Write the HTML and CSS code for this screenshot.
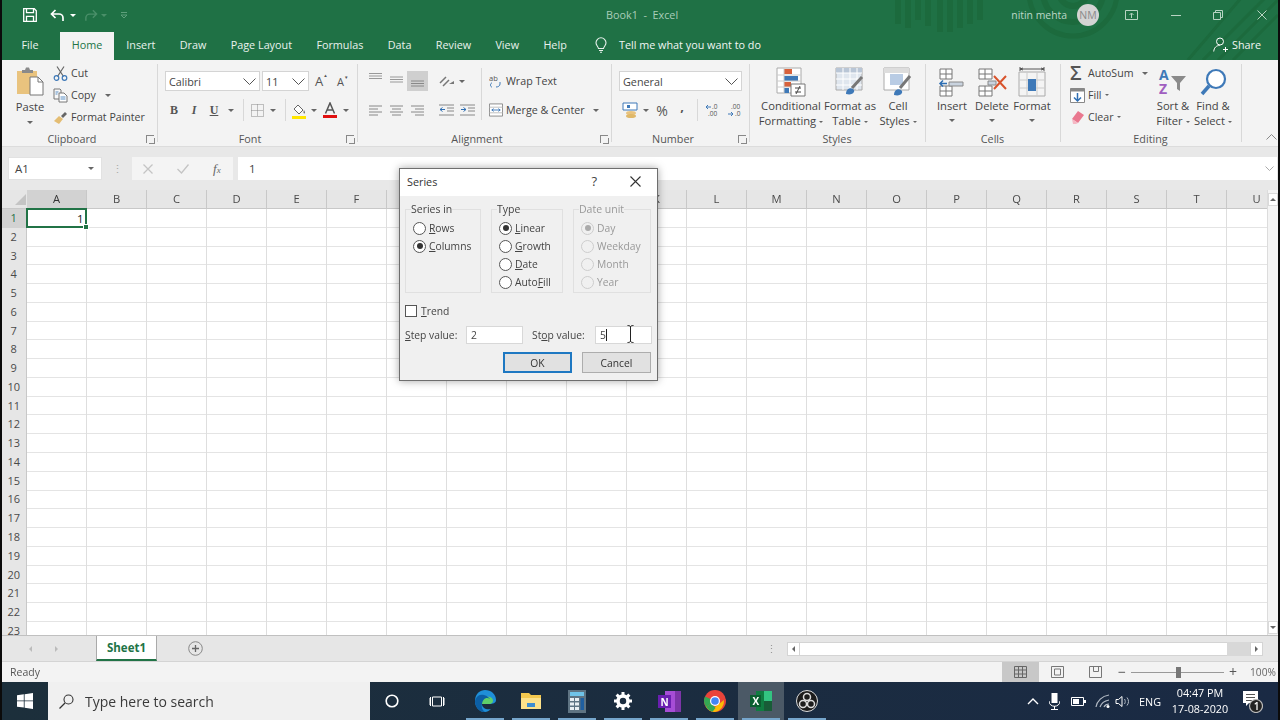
FILE: index.html
```html
<!DOCTYPE html>
<html lang="en">
<head>
<meta charset="utf-8">
<title>Book1 - Excel</title>
<link rel="stylesheet" href="styles.css">
</head>
<body>
<div class="screen">
  <header class="top">
    <svg class="decor" viewBox="0 0 420 60" width="420" height="60" aria-hidden="true">
      <g fill="none" stroke="#1c6a3d">
        <circle cx="215" cy="-8" r="44" stroke-width="5"/>
        <circle cx="215" cy="-8" r="30" stroke-width="6"/>
        <circle cx="215" cy="-8" r="14" stroke-width="6"/>
        <path d="M40-2v26M50-2v30M60-2v22M70-2v28M82-2v34M92-2v34M102-2v30M112-2v26M122-2v22" stroke-width="6"/>
        <path d="M345 60l70-70M360 60l60-60M375 60l45-45M330 60l60-70" stroke-width="3"/>
      </g>
    </svg>
    <div class="titlebar">
      <div class="qat">
        <svg class="q-save" width="14" height="14" viewBox="0 0 14 14"><path d="M.7.7h10.6l2 2v10.6H.7z" fill="none" stroke="#fff" stroke-width="1.3"/><path d="M3.5 1v3.6h7V1M3.5 13V8.300h7V13" fill="none" stroke="#fff" stroke-width="1.3"/></svg>
        <svg class="q-undo" width="15" height="13" viewBox="0 0 15 13"><path d="M5.500 1L1.500 5l4 4M2 5h7a4 4 0 0 1 4 4v3" fill="none" stroke="#fff" stroke-width="1.700"/></svg>
        <span class="caret caret-white q-c1"></span>
        <svg class="q-redo" width="14" height="13" viewBox="0 0 15 13"><path d="M9.500 1l4 4-4 4M13 5H6a4 4 0 0 0-4 4v3" fill="none" stroke="#4a8f69" stroke-width="1.500"/></svg>
        <span class="caret caret-dim q-c2"></span>
        <svg class="q-more" width="8" height="8" viewBox="0 0 8 8"><path d="M1 1.500h6M1 4l3 3 3-3z" fill="none" stroke="#5f9f7c"/></svg>
      </div>
      <div class="doc-title">Book1 &nbsp;-&nbsp; Excel</div>
      <div class="window-side">
        <span class="user">nitin mehta</span>
        <span class="avatar">NM</span>
        <svg class="w-opt" width="13" height="10" viewBox="0 0 13 10"><path d="M.5.500h12v9H.5zM6.500 8V3.500M4.500 5l2-2 2 2" fill="none" stroke="#b8d4c3"/></svg>
        <svg class="w-min" width="10" height="10" viewBox="0 0 10 10"><path d="M0 5.500h10" stroke="#b8d4c3"/></svg>
        <svg class="w-max" width="10" height="10" viewBox="0 0 10 10"><path d="M.5 2.500h7v7h-7zM2.500 2.500v-2h7v7h-2" fill="none" stroke="#b8d4c3"/></svg>
        <svg class="w-close" width="10" height="10" viewBox="0 0 10 10"><path d="M.5.500l9 9M9.500.500l-9 9" stroke="#b8d4c3"/></svg>
      </div>
    </div>
    <nav class="tabs">
      <span class="tab tab-file">File</span>
      <span class="tab tab-home">Home</span>
      <span class="tab">Insert</span>
      <span class="tab">Draw</span>
      <span class="tab">Page Layout</span>
      <span class="tab">Formulas</span>
      <span class="tab">Data</span>
      <span class="tab">Review</span>
      <span class="tab">View</span>
      <span class="tab">Help</span>
      <svg class="bulb" width="12" height="16" viewBox="0 0 12 16"><path d="M3.500 11.500C3 9 1 8.500 1 5.800a5 5 0 0 1 10 0c0 2.700-2 3.200-2.500 5.700zM4 13.500h4M5 15.300h2" fill="none" stroke="#e8f1ec" stroke-width="1.100"/></svg>
      <span class="tell">Tell me what you want to do</span>
      <span class="share">
        <svg width="15" height="15" viewBox="0 0 15 15"><circle cx="7" cy="4.500" r="3.500" fill="none" stroke="#fff"/><path d="M.7 14.500c.5-4 2.500-6 6-6M10 12.500h5M12.500 10v5" fill="none" stroke="#fff"/></svg>
        Share
      </span>
    </nav>
  </header>

  <section class="ribbon">
    <div class="group g-clip">
      <div class="g-body">
        <div class="big paste">
          <svg width="28" height="29" viewBox="0 0 28 29"><path d="M1 4h20v23H1z" fill="#e9c37e"/><path d="M6 3h3l1-2.500h3L14 3h3v3H6z" fill="#8a8a8a"/><path d="M14 10h8l5 5v13H14z" fill="#fff" stroke="#777"/><path d="M22 10v5h5" fill="none" stroke="#777"/></svg>
          <span>Paste</span>
          <span class="caret big-caret"></span>
        </div>
        <div class="stack">
          <div class="line">
            <svg class="sm" width="15" height="15" viewBox="0 0 15 15"><path d="M4 .5l6.500 10M11 .5L4.500 10.500" fill="none" stroke="#666" stroke-width="1.200"/><circle cx="3.500" cy="12" r="2.300" fill="none" stroke="#3e79b8" stroke-width="1.200"/><circle cx="11.500" cy="12" r="2.300" fill="none" stroke="#3e79b8" stroke-width="1.200"/></svg>
            Cut
          </div>
          <div class="line">
            <svg class="sm" width="15" height="15" viewBox="0 0 15 15"><path d="M1 1h6l1 1v9H1z" fill="#f8f8f8" stroke="#777"/><path d="M6 5h5l3 3v6H6z" fill="#fff" stroke="#777"/><path d="M2.500 4h3M2.500 6h2M7.500 9h5M7.500 11h5" stroke="#5a8fc4"/></svg>
            Copy <span class="caret copy-caret"></span>
          </div>
          <div class="line">
            <svg class="sm" width="15" height="15" viewBox="0 0 15 15"><path d="M1 11l5-5 4 3-4 5z" fill="#e4bd73"/><path d="M8 6l4-4 2 2-4 4z" fill="#666"/></svg>
            Format Painter
          </div>
        </div>
      </div>
      <div class="g-label"><span>Clipboard</span><i class="launch"></i></div>
    </div>

    <div class="group g-font">
      <div class="g-body col">
        <div class="row-a">
          <div class="combo c-name">Calibri<svg class="chev" width="13" height="7" viewBox="0 0 13 7"><path d="M.5.500l6 6 6-6" fill="none" stroke="#555"/></svg></div>
          <div class="combo c-size">11<svg class="chev" width="13" height="7" viewBox="0 0 13 7"><path d="M.5.500l6 6 6-6" fill="none" stroke="#555"/></svg></div>
          <span class="grow">A<sup>&#9650;</sup></span>
          <span class="shrink">A<sup>&#9660;</sup></span>
        </div>
        <div class="row-b">
          <span class="cell w20 bold">B</span>
          <span class="cell w20 ital">I</span>
          <span class="cell w20 bold und">U</span>
          <span class="cell w14"><span class="caret"></span></span>
          <span class="vsep"></span>
          <span class="cell w18"><svg width="13" height="13" viewBox="0 0 13 13"><path d="M.5.500h12v12H.5zM6.500.500v12M.5 6.500h12" fill="none" stroke="#888" stroke-dasharray="1 1"/></svg></span>
          <span class="cell w14"><span class="caret"></span></span>
          <span class="vsep"></span>
          <span class="cell w18"><svg width="16" height="17" viewBox="0 0 16 17"><path d="M3 7l4-4 5 5-4 4z" fill="#fff" stroke="#666"/><path d="M13 8c1 2 1.500 3 .5 3.500S12 10 13 8z" fill="#777"/><path d="M1 14h14v3H1z" fill="#ffe600"/></svg></span>
          <span class="cell w12"><span class="caret"></span></span>
          <span class="cell w20"><svg width="16" height="16" viewBox="0 0 16 16"><path d="M1 13h14v3H1z" fill="#e01010"/><path d="M3.500 11.500L8 1l4.500 10.500M5 8h6" fill="none" stroke="#555" stroke-width="1.500"/></svg></span>
          <span class="cell w12"><span class="caret"></span></span>
        </div>
      </div>
      <div class="g-label"><span>Font</span><i class="launch"></i></div>
    </div>

    <div class="group g-align">
      <div class="g-body">
        <div class="col">
          <div class="row-a">
            <span class="cell w21"><svg width="14" height="18" viewBox="0 0 14 18"><path d="M0 1.500h13M0 4h13M0 6.500h13" stroke="#999"/></svg></span>
            <span class="cell w21"><svg width="14" height="18" viewBox="0 0 14 18"><path d="M0 5h13M0 7.500h13M0 10h13" stroke="#999"/></svg></span>
            <span class="cell w21 active"><svg width="14" height="18" viewBox="0 0 14 18"><path d="M0 9h13M0 11.500h13M0 14h13" stroke="#888"/></svg></span>
            <span class="cell w18 ml10"><svg width="16" height="13" viewBox="0 0 16 13"><path d="M1 8l6-6M4 11l6-6" stroke="#777" stroke-width="1.500" fill="none"/><path d="M10 9l5-3v3z" fill="#777"/></svg></span>
            <span class="cell w12"><span class="caret"></span></span>
          </div>
          <div class="row-b">
            <span class="cell w21"><svg width="14" height="11" viewBox="0 0 14 11"><path d="M0 1h13M0 4h9M0 7h13M0 10h9" stroke="#888"/></svg></span>
            <span class="cell w21"><svg width="14" height="11" viewBox="0 0 14 11"><path d="M0 1h13M2 4h9M0 7h13M2 10h9" stroke="#888"/></svg></span>
            <span class="cell w21"><svg width="14" height="11" viewBox="0 0 14 11"><path d="M0 1h13M4 4h9M0 7h13M4 10h9" stroke="#888"/></svg></span>
            <span class="cell w21 ml8"><svg width="16" height="13" viewBox="0 0 16 13"><path d="M0 1h15M8 4h7M8 7h7M0 11h15" stroke="#888"/><path d="M6 5.500H1M3.500 3.500l-2.500 2 2.500 2" fill="none" stroke="#2f6fb3"/></svg></span>
            <span class="cell w21"><svg width="16" height="13" viewBox="0 0 16 13"><path d="M0 1h15M8 4h7M8 7h7M0 11h15" stroke="#888"/><path d="M1 5.500h5M3.500 3.500l2.500 2-2.500 2" fill="none" stroke="#2f6fb3"/></svg></span>
          </div>
        </div>
        <span class="vsep tall"></span>
        <div class="col wrapcol">
          <div class="row-a">
            <svg class="sm2" width="14" height="14" viewBox="0 0 14 14"><text x="0" y="7" class="ab">ab</text><path d="M3 9c-2 0-2 4 0 4M11 8v2c0 2-2 3-4 3" fill="none" stroke="#3e79b8"/></svg>
            <span>Wrap Text</span>
          </div>
          <div class="row-b">
            <svg class="sm2" width="14" height="14" viewBox="0 0 15 14"><path d="M.5.500h14v13H.5z" fill="#fff" stroke="#888"/><path d="M.5 4h14M.5 10h14" stroke="#bbb"/><path d="M3 7h9M5 5.500L3 7l2 1.500M10 5.500L12 7l-2 1.500" fill="none" stroke="#3e79b8"/></svg>
            <span>Merge &amp; Center</span>
            <span class="caret merge-caret"></span>
          </div>
        </div>
      </div>
      <div class="g-label"><span>Alignment</span><i class="launch"></i></div>
    </div>

    <div class="group g-num">
      <div class="g-body col">
        <div class="row-a">
          <div class="combo c-gen">General<svg class="chev" width="13" height="7" viewBox="0 0 13 7"><path d="M.5.500l6 6 6-6" fill="none" stroke="#555"/></svg></div>
        </div>
        <div class="row-b">
          <span class="cell w20"><svg width="17" height="16" viewBox="0 0 17 16"><path d="M1 1h14v7H1z" fill="#fff" stroke="#3e79b8"/><path d="M5 3h3v3H5z" fill="#3e79b8"/><ellipse cx="9" cy="11" rx="5" ry="2" fill="#e9c37e"/><ellipse cx="9" cy="14" rx="5" ry="2" fill="#e0b868"/></svg></span>
          <span class="cell w12"><span class="caret"></span></span>
          <span class="cell w20 pct">%</span>
          <span class="cell w20 bold comma">,</span>
          <span class="vsep"></span>
          <span class="cell w22 inc"><svg width="16" height="14" viewBox="0 0 16 14"><path d="M1 4h5M3 2L1 4l2 2" fill="none" stroke="#3e79b8"/><text x="7" y="6" class="dec">.0</text><text x="3" y="13" class="dec">.00</text></svg></span>
          <span class="cell w22"><svg width="16" height="14" viewBox="0 0 16 14"><text x="4" y="6" class="dec">.00</text><path d="M1 11h5M4 9l2 2-2 2" fill="none" stroke="#3e79b8"/><text x="8" y="13" class="dec">.0</text></svg></span>
        </div>
      </div>
      <div class="g-label"><span>Number</span><i class="launch"></i></div>
    </div>

    <div class="group g-styles">
      <div class="g-body">
        <div class="big b62">
          <svg class="big-ico" width="30" height="30" viewBox="0 0 30 30"><path d="M1 1h24v25H1z" fill="#fff" stroke="#aaa"/><path d="M8 2h8v5H8z" fill="#d8623c"/><path d="M8 9h14v5H8z" fill="#3e79b8"/><path d="M8 15h7v5H8z" fill="#d8623c"/><path d="M8 21h5v5H8z" fill="#3e79b8"/><path d="M1 8h24M1 14h24M1 20h24M8 1v25" stroke="#ccc" fill="none"/><path d="M15 17h14v12H15z" fill="#fff" stroke="#777"/><path d="M19 21h6M19 25h6M24 19l-4 8" stroke="#444" fill="none"/></svg>
          <span>Conditional</span><span>Formatting<i class="caret tiny"></i></span>
        </div>
        <div class="big b56">
          <svg class="big-ico" width="30" height="30" viewBox="0 0 30 30"><path d="M1 1h26v22H1z" fill="#dfe6ee" stroke="#aaa"/><path d="M1 1h26v5H1z" fill="#b9c6d6"/><path d="M1 6h26M1 12h26M1 18h26M8 1v22M15 1v22M22 1v22" stroke="#fff" fill="none"/><path d="M27 10L17 21" stroke="#777" stroke-width="3"/><path d="M11 27c0-5 4-7 7-5s0 7-7 5z" fill="#3e79b8"/></svg>
          <span>Format as</span><span>Table<i class="caret tiny"></i></span>
        </div>
        <div class="big b40">
          <svg class="big-ico" width="30" height="30" viewBox="0 0 30 30"><path d="M1 1h25v22H1z" fill="#fff" stroke="#aaa"/><path d="M1 1h25v5H1z" fill="#ddd"/><path d="M7 7h13v11H7z" fill="#b9cce4"/><path d="M27 9L17 21" stroke="#777" stroke-width="3"/><path d="M11 28c0-5 4-7 7-5s0 7-7 5z" fill="#3e79b8"/></svg>
          <span>Cell</span><span>Styles<i class="caret tiny"></i></span>
        </div>
      </div>
      <div class="g-label plain"><span>Styles</span></div>
    </div>

    <div class="group g-cells">
      <div class="g-body">
        <div class="big b40">
          <svg class="big-ico" width="28" height="28" viewBox="0 0 28 28"><path d="M2 1h12v10H2zM8 1v10M2 6h12M2 18h12v10H2zM8 18v10M2 23h12" fill="#fff" stroke="#777"/><path d="M11 14h14v4H11z" fill="#c9d3df" stroke="#888"/><path d="M9 15.500H2M5 12.500l-3 3 3 3" fill="none" stroke="#2f6fb3" stroke-width="1.500"/></svg>
          <span>Insert</span><i class="caret big-caret"></i>
        </div>
        <div class="big b40">
          <svg class="big-ico" width="30" height="28" viewBox="0 0 30 28"><path d="M2 1h13v10H2zM8 1v10M2 6h13M2 18h13v10H2zM8 18v10M2 23h13" fill="#fff" stroke="#777"/><path d="M11 13h8v4h-8z" fill="#c9d3df" stroke="#888"/><path d="M17 8l12 13M29 8L17 21" stroke="#d8532c" stroke-width="2"/></svg>
          <span>Delete</span><i class="caret big-caret"></i>
        </div>
        <div class="big b40">
          <svg class="big-ico" width="28" height="30" viewBox="0 0 28 30"><path d="M1 5h26v24H1z" fill="#f4f4f4" stroke="#aaa"/><path d="M9 5v24M19 5v24M1 13h26M1 21h26" stroke="#ccc" fill="none"/><path d="M10 12h8v12h-8z" fill="#3e79b8"/><path d="M2 2h24M2 0v4M26 0v4M5 1L2 2l3 1M23 1l3 1-3 1" fill="none" stroke="#555"/></svg>
          <span>Format</span><i class="caret big-caret"></i>
        </div>
      </div>
      <div class="g-label plain"><span>Cells</span></div>
    </div>

    <div class="group g-edit">
      <div class="g-body">
        <div class="stack edit-stack">
          <div class="line"><span class="sigma">&Sigma;</span>AutoSum<span class="caret sum-caret"></span></div>
          <div class="line">
            <svg class="sm" width="15" height="15" viewBox="0 0 15 15"><path d="M.5.500h14v14H.5z" fill="#fff" stroke="#888"/><path d="M.5.500h14v3H.5z" fill="#888"/><path d="M7.500 5v8M4 9.500l3.500 3.500L11 9.500" fill="none" stroke="#2f6fb3" stroke-width="1.500"/></svg>
            Fill<i class="caret tiny"></i>
          </div>
          <div class="line">
            <svg class="sm" width="15" height="15" viewBox="0 0 15 15"><path d="M8 1l6 4-6 8-6-4z" fill="#e9788f"/><path d="M2 9l6 4-2 1H3z" fill="#f5b8c4"/></svg>
            Clear<i class="caret tiny"></i>
          </div>
        </div>
        <div class="big b40">
          <svg class="big-ico" width="30" height="28" viewBox="0 0 30 28"><text x="1" y="12" class="az az-a">A</text><text x="1" y="26" class="az az-z">Z</text><path d="M13 8h15l-6 7v8l-3-2v-6z" fill="#8a8a8a"/></svg>
          <span>Sort &amp;</span><span>Filter<i class="caret tiny"></i></span>
        </div>
        <div class="big b40">
          <svg class="big-ico" width="28" height="28" viewBox="0 0 28 28"><circle cx="17" cy="11" r="9" fill="#fff" stroke="#3e79b8" stroke-width="2.200"/><path d="M10 18l-7 8" stroke="#3e79b8" stroke-width="3.500"/></svg>
          <span>Find &amp;</span><span>Select<i class="caret tiny"></i></span>
        </div>
      </div>
      <div class="g-label plain"><span>Editing</span></div>
    </div>

    <div class="collapse"><svg width="11" height="6" viewBox="0 0 11 6"><path d="M.5 5.500l5-5 5 5" fill="none" stroke="#888"/></svg></div>
  </section>

  <div class="strip"></div>

  <section class="fbar">
    <div class="namebox">A1<span class="caret name-caret"></span></div>
    <div class="fdots">&#8942;</div>
    <div class="fbtns">
      <svg width="10" height="10" viewBox="0 0 10 10"><path d="M.5.500l9 9M9.500.500l-9 9" stroke="#c4c4c4" stroke-width="1.300"/></svg>
      <svg width="12" height="10" viewBox="0 0 12 10"><path d="M.5 5l4 4 7-8.500" fill="none" stroke="#c4c4c4" stroke-width="1.300"/></svg>
      <span class="fx">f<small>x</small></span>
    </div>
    <div class="finput">1<svg class="fchev" width="9" height="5" viewBox="0 0 9 5"><path d="M.5.500l4 4 4-4" fill="none" stroke="#aaa"/></svg></div>
  </section>

  <section class="sheet">
    <div class="colhead">
      <div class="corner"><svg width="11" height="11" viewBox="0 0 11 11"><path d="M11 0v11H0z" fill="#c4c4c4"/></svg></div>
      <div class="columns">
        <span class="on">A</span><span>B</span><span>C</span><span>D</span><span>E</span><span>F</span><span>G</span><span>H</span><span>I</span><span>J</span><span>K</span><span>L</span><span>M</span><span>N</span><span>O</span><span>P</span><span>Q</span><span>R</span><span>S</span><span>T</span><span>U</span>
      </div>
    </div>
    <div class="gridwrap">
      <div class="rowhead">
        <span class="on">1</span><span>2</span><span>3</span><span>4</span><span>5</span><span>6</span><span>7</span><span>8</span><span>9</span><span>10</span><span>11</span><span>12</span><span>13</span><span>14</span><span>15</span><span>16</span><span>17</span><span>18</span><span>19</span><span>20</span><span>21</span><span>22</span><span>23</span>
      </div>
      <div class="cells">
        <div class="selected">1<i class="handle"></i></div>
      </div>
    </div>
    <aside class="vscroll">
      <span class="sbtn"><i class="tri-up"></i></span>
      <span class="sbtn"><i class="tri-down"></i></span>
    </aside>
  </section>

  <section class="sheetbar">
    <span class="nav nav-l"><i class="tri-left dim"></i></span>
    <span class="nav"><i class="tri-right dim"></i></span>
    <span class="sheet-tab">Sheet1</span>
    <svg class="add" width="15" height="15" viewBox="0 0 15 15"><circle cx="7.500" cy="7.500" r="6.800" fill="none" stroke="#888"/><path d="M7.500 4v7M4 7.500h7" stroke="#666" stroke-width="1.300"/></svg>
    <span class="sdots">&#8942;</span>
    <div class="hscroll">
      <span class="hbtn"><i class="tri-left"></i></span>
      <span class="hthumb"></span>
      <span class="hrest"></span>
      <span class="hbtn"><i class="tri-right"></i></span>
    </div>
  </section>

  <section class="status">
    <span class="ready">Ready</span>
    <div class="views">
      <span class="view active"><svg width="13" height="12" viewBox="0 0 13 12"><path d="M.5.500h12v11H.5zM4.500.500v11M8.500.500v11M.5 4h12M.5 8h12" fill="none" stroke="#666"/></svg></span>
      <span class="view"><svg width="13" height="12" viewBox="0 0 13 12"><path d="M.5.500h12v11H.5zM3.500 3h6v6h-6z" fill="none" stroke="#777"/></svg></span>
      <span class="view"><svg width="13" height="12" viewBox="0 0 13 12"><path d="M.5.500h12v11H.5zM4.500.500v5h5v-5" fill="none" stroke="#777"/></svg></span>
    </div>
    <div class="zoom">
      <span class="zm">&minus;</span>
      <div class="slider"><i></i></div>
      <span class="zm">+</span>
      <span class="pct100">100%</span>
    </div>
  </section>

  <footer class="taskbar">
    <span class="start"><svg width="16" height="16" viewBox="0 0 16 16"><path d="M0 2.300l6.800-1v6.200H0zM7.600 1.200L16 0v7.500H7.600zM0 8.300h6.800v6.300L0 13.700zM7.600 8.300H16V16l-8.400-1.200z" fill="#fff"/></svg></span>
    <div class="search">
      <svg width="15" height="15" viewBox="0 0 15 15"><circle cx="9.500" cy="5.500" r="4.500" fill="none" stroke="#333" stroke-width="1.100"/><path d="M6 9l-5.500 5.500" stroke="#333" stroke-width="1.300"/></svg>
      <span>Type here to search</span>
    </div>
    <span class="tb tb-o"><svg width="14" height="14" viewBox="0 0 14 14"><circle cx="7" cy="7" r="5.800" fill="none" stroke="#fff" stroke-width="1.600"/></svg></span>
    <span class="tb"><svg width="16" height="13" viewBox="0 0 16 13"><path d="M3.500 2h9v9h-9zM0 3v7M1.500 2v9M14.500 2v9M16 3v7" fill="none" stroke="#fff"/></svg></span>
    <span class="tb app"><svg width="24" height="24" viewBox="0 0 24 24"><path d="M2 12C2 5 7 1 12 1c6 0 11 4 11 10 0 3-3 4-7 4H9c0 4 4 6 9 5-2 2-4 3-6 3C6 23 2 18 2 12z" fill="#1f8fd8"/><path d="M9 15C7 9 13 6 17 8c3 1 4 4 2 6-1 1-3 1-3 1z" fill="#5fd06a"/><path d="M2 12c1-5 5-7 9-6s6 4 6 4c-3-2-7-1-8 5-1 4 1 7 3 8-6 0-10-5-10-11z" fill="#0c5fa5"/></svg></span>
    <span class="tb app"><svg width="22" height="18" viewBox="0 0 22 18"><path d="M1 1h8l2 2h10v14H1z" fill="#f4c94f"/><path d="M1 6h20v11H1z" fill="#fde28a"/><path d="M7 11h8v4H7z" fill="#3e8ed0"/></svg></span>
    <span class="tb app"><svg width="18" height="23" viewBox="0 0 18 23"><path d="M0 0h18v23H0z" fill="#5f7483"/><path d="M2 2h14v4H2z" fill="#6fc3e8"/><path d="M2 8h4v3H2zM7 8h4v3H7zM2 12.500h4v3H2zM7 12.500h4v3H7zM2 17h4v3H2zM7 17h4v3H7z" fill="#e8eef2"/><path d="M12.500 8H16v12h-3.500z" fill="#1f5fa0"/></svg></span>
    <span class="tb app"><svg width="18" height="18" viewBox="0 0 18 18"><circle cx="9" cy="9" r="5" fill="none" stroke="#fff" stroke-width="3.500"/><path d="M9 0v4M9 14v4M0 9h4M14 9h4M2.600 2.600l2.800 2.800M12.600 12.600l2.800 2.800M2.600 15.400l2.800-2.800M12.600 5.400l2.800-2.800" stroke="#fff" stroke-width="3"/></svg></span>
    <span class="tb app"><svg width="23" height="21" viewBox="0 0 23 21"><path d="M7 0h16v21H7z" fill="#a64dd6"/><path d="M17 0h6v21h-6z" fill="#7d35a8"/><path d="M0 4h13v13H0z" fill="#6a1fb0"/><text x="2.500" y="14.500" class="tile">N</text></svg></span>
    <span class="tb app"><svg width="22" height="22" viewBox="0 0 22 22"><circle cx="11" cy="11" r="11" fill="#e9443a"/><path d="M11 11L2 17A11 11 0 0 1 1 6.500z" fill="#34a853"/><path d="M11 22a11 11 0 0 1-9-5l5-3 4 3 9-7a11 11 0 0 1-9 12z" fill="#fbbc05"/><path d="M2 17l5.500-4 4 5-3 3.800A11 11 0 0 1 2 17z" fill="#34a853"/><circle cx="11" cy="11" r="5" fill="#fff"/><circle cx="11" cy="11" r="3.800" fill="#4285f4"/></svg></span>
    <span class="tb app current"><svg width="22" height="20" viewBox="0 0 22 20"><path d="M6 0h16v20H6z" fill="#107c41"/><path d="M14 0h8v10h-8z" fill="#33c481"/><path d="M14 10h8v10h-8z" fill="#185c37"/><path d="M0 4h11v12H0z" fill="#0b5e30"/><text x="2.500" y="14" class="tile">X</text></svg></span>
    <span class="tb app"><svg width="22" height="22" viewBox="0 0 22 22"><circle cx="11" cy="11" r="10.500" fill="#1c1c1c" stroke="#ddd"/><circle cx="11" cy="7" r="3.500" fill="none" stroke="#ddd" stroke-width="1.500"/><circle cx="7" cy="14" r="3.500" fill="none" stroke="#ddd" stroke-width="1.500"/><circle cx="15" cy="14" r="3.500" fill="none" stroke="#ddd" stroke-width="1.500"/></svg></span>
    <div class="tray">
      <span class="t24"><svg width="12" height="7" viewBox="0 0 12 7"><path d="M1 6l5-5 5 5" fill="none" stroke="#fff" stroke-width="1.400"/></svg></span>
      <span class="t18"><svg width="11" height="17" viewBox="0 0 11 17"><path d="M2.500 0h6v10h-6z" fill="#fff"/><path d="M0 8c0 7 11 7 11 0M5.500 13v3M2 16.500h7" fill="none" stroke="#fff"/></svg></span>
      <span class="t30"><svg width="15" height="9" viewBox="0 0 15 9"><path d="M.5.500h12v8H.5z" fill="none" stroke="#fff"/><path d="M2 2h6v5H2z" fill="#fff"/><path d="M13 3h2v3h-2z" fill="#fff"/></svg></span>
      <span class="t18"><svg width="15" height="14" viewBox="0 0 15 14"><path d="M1 13C2 7 7 2 14 1M5 13c1-3 4-6 9-7M9 13c1-2 3-3 5-3" fill="none" stroke="#b4bcc6" stroke-width="1.200"/><circle cx="13" cy="12.500" r="1.500" fill="#fff"/></svg></span>
      <span class="t22"><svg width="15" height="13" viewBox="0 0 15 13"><path d="M1 4.500h2.500L7 1.500v10l-3.500-3H1z" fill="none" stroke="#fff"/><path d="M9.500 4c1 1.500 1 3.500 0 5M12 2.500c2 2.500 2 5.500 0 8" fill="none" stroke="#b4bcc6"/></svg></span>
      <span class="t34 eng">ENG</span>
      <span class="clock"><span>04:47 PM</span><span>17-08-2020</span></span>
      <span class="notif"><svg width="21" height="23" viewBox="0 0 21 23"><path d="M1 1h15v12H7l-3 3v-3H1z" fill="#fff"/><path d="M4 4.500h9M4 7.500h9M4 10.500h6" stroke="#555"/><circle cx="14" cy="16" r="6.500" fill="#222" stroke="#bbb" stroke-width="1.200"/><text x="11.700" y="19.500" class="ncount">1</text></svg></span>
    </div>
  </footer>

  <div class="dialog">
    <div class="d-head">
      <span class="d-title">Series</span>
      <span class="d-help">?</span>
      <svg class="d-x" width="11" height="11" viewBox="0 0 11 11"><path d="M.5.500l10 10M10.500.500l-10 10" stroke="#333" stroke-width="1.100"/></svg>
    </div>
    <div class="d-body">
      <div class="d-groups">
        <fieldset class="fs fs-in">
          <legend>Series in</legend>
          <label class="opt"><i class="radio"></i><span><u>R</u>ows</span></label>
          <label class="opt"><i class="radio sel"></i><span><u>C</u>olumns</span></label>
        </fieldset>
        <fieldset class="fs fs-type">
          <legend>Type</legend>
          <label class="opt"><i class="radio sel"></i><span><u>L</u>inear</span></label>
          <label class="opt"><i class="radio"></i><span><u>G</u>rowth</span></label>
          <label class="opt"><i class="radio"></i><span><u>D</u>ate</span></label>
          <label class="opt"><i class="radio"></i><span>Auto<u>F</u>ill</span></label>
        </fieldset>
        <fieldset class="fs fs-unit">
          <legend>Date unit</legend>
          <label class="opt"><i class="radio sel"></i><span>Day</span></label>
          <label class="opt"><i class="radio"></i><span>Weekday</span></label>
          <label class="opt"><i class="radio"></i><span>Month</span></label>
          <label class="opt"><i class="radio"></i><span>Year</span></label>
        </fieldset>
      </div>
      <label class="trend"><i class="check"></i><span><u>T</u>rend</span></label>
      <div class="values">
        <span class="v-l1"><u>S</u>tep value:</span>
        <span class="v-in">2</span>
        <span class="v-l2">St<u>o</u>p value:</span>
        <span class="v-in v-stop">5<i class="textcaret"></i>
          <svg class="ibeam" width="7" height="18" viewBox="0 0 7 18"><path d="M.5.500c2 0 3 .5 3 1.500 0-1 1-1.500 3-1.500M3.500 2v14M.5 17.500c2 0 3-.5 3-1.500 0 1 1 1.500 3 1.500" fill="none" stroke="#222"/></svg>
        </span>
      </div>
      <div class="d-btns">
        <span class="btn btn-ok">OK</span>
        <span class="btn">Cancel</span>
      </div>
    </div>
  </div>
</div>
</body>
</html>
```
FILE: styles.css
```css
*{box-sizing:border-box}
html,body{margin:0;height:100%;overflow:hidden}
body{background:#0b0b0b;font-family:"Open Sans","Noto Sans",sans-serif;font-size:11.200px;color:#444}
i{font-style:normal;display:inline-block}
.screen{position:relative;width:1280px;height:720px;padding:0 2px;display:flex;flex-direction:column;overflow:hidden;filter:blur(.4px)}

/* top green */
.top{position:relative;height:60px;background:#1f7145;color:#fff;flex:none;overflow:hidden}
.decor{position:absolute;right:0;top:0}
.titlebar{position:relative;display:flex;align-items:center;height:30px}
.qat{display:flex;align-items:center;width:130px;flex:none}
.q-save{margin-left:21px}
.q-undo{margin-left:13px}
.q-c1{margin-left:5px}
.q-redo{margin-left:8px}
.q-c2{margin-left:3px}
.q-more{margin-left:13px}
.caret{display:inline-block;width:0;height:0;border:3px solid transparent;border-bottom:0;border-top-color:#666}
.caret-white{border-top-color:#fff}
.caret-dim{border-top-color:#4a8f69}
.doc-title{position:absolute;left:604px;top:7px;font-size:10.800px;color:#a9cdb9;white-space:nowrap}
.window-side{margin-left:auto;display:flex;align-items:center;color:#bcd7c7}
.user{font-size:10.400px}
.avatar{width:22px;height:22px;border-radius:50%;background:#d4d4d4;color:#8a8a8a;display:flex;align-items:center;justify-content:center;margin-left:10px;font-size:10.500px}
.w-opt{margin-left:26px}
.w-min{margin-left:33px}
.w-max{margin-left:32px}
.w-close{margin-left:34px;margin-right:11px}
.tabs{position:relative;display:flex;align-items:center;height:30px;font-size:10.800px}
.tab{height:28px;margin-top:2px;padding:0 12.200px 3px;display:flex;align-items:center;color:#e9f2ed;white-space:nowrap}
.tab-file{padding:0 21.500px 3px 19.500px}
.tab-home{background:#f3f3f3;color:#217346;padding:0 11.500px 3px;width:54px;justify-content:center}
.bulb{margin-left:16px;margin-bottom:1px}
.tell{margin-left:12px;margin-bottom:1px;color:#f1f6f3;white-space:nowrap}
.share{margin-left:auto;margin-right:17px;margin-bottom:1px;display:flex;align-items:center;gap:4px;color:#f1f6f3}

/* ribbon */
.ribbon{height:86px;flex:none;display:flex;background:#f3f3f3;position:relative}
.group{position:relative;height:86px;flex:none;display:flex;flex-direction:column}
.group::after{content:"";position:absolute;right:0;top:4px;bottom:4px;width:1px;background:#d8d8d8}
.g-body{height:73px;display:flex;flex:none}
.col{display:flex;flex-direction:column}
.g-label{height:12px;line-height:12px;display:flex;font-size:10.800px;color:#555}
.g-label span{flex:1;text-align:center}
.g-label.plain span{padding-right:2px}
.launch{width:16px;position:relative}
.launch::before{content:"";position:absolute;left:4px;top:2px;width:7px;height:7px;border:1px solid #888;border-right:0;border-bottom:0;box-shadow:2px 2px 0 -1px #888}
.g-clip{width:156px}
.g-font{width:200px}
.g-align{width:254px}
.g-num{width:138px}
.g-styles{width:176px}
.g-cells{width:135px}
.g-edit{width:181px}

.paste{width:46px;margin-left:5px;padding-top:7px}
.paste svg{height:29px;flex:none}
.paste span{line-height:15px}
.paste span:first-of-type{margin-top:3px}
.big{display:flex;flex-direction:column;align-items:center;flex:none;white-space:nowrap}
.big>span{line-height:15px;height:15px}
.big-ico{height:30px;margin-top:7px;margin-bottom:1px;flex:none}
.big-caret{margin-top:6px}
.paste .big-caret{margin-top:7px;height:0}
.stack{padding-top:2px;display:flex;flex-direction:column;font-size:10.600px}
.line{height:22px;display:flex;align-items:center;white-space:nowrap}
.sm{flex:none;margin-right:3px}
.copy-caret{margin-left:9px}
.tiny{margin-left:3px;vertical-align:middle;border-width:2.500px;border-bottom:0}
.row-a{height:20px;margin-top:11px;display:flex;align-items:center;white-space:nowrap}
.row-b{height:20px;margin-top:9px;display:flex;align-items:center;white-space:nowrap}
.g-font .row-a,.g-num .row-a{padding-left:7px}
.g-font .row-b{padding-left:6px}
.g-num .row-b{padding-left:8px}
.combo{height:20px;background:#fff;border:1px solid #d4d4d4;display:flex;align-items:center;padding-left:3px;position:relative;font-size:10.800px}
.chev{margin-left:auto;margin-right:3px}
.c-name{width:95px}
.c-size{width:47px;margin-left:2px}
.c-gen{width:123px}
.grow,.shrink{display:inline-flex;color:#555;font-size:13px}
.grow{margin-left:6px;width:15px}
.shrink{margin-left:7px;font-size:11px;width:14px}
.grow sup,.shrink sup{font-size:4.500px;line-height:7px;vertical-align:top}
.cell{display:flex;align-items:center;justify-content:center;height:20px;flex:none;color:#555}
.w12{width:12px}.w14{width:14px}.w18{width:18px}.w20{width:20px}.w21{width:21px}.w22{width:22px}
.ml10{margin-left:10px}.ml8{margin-left:8px}
.bold{font-weight:700;font-family:"Liberation Serif","Open Sans",serif;font-size:12px}
.ital{font-style:italic;font-weight:700;font-family:"Liberation Serif",serif;font-size:12px}
.und{text-decoration:underline}
.vsep{width:1px;height:22px;margin:0 4.500px;background:#d8d8d8;flex:none}
.vsep.tall{height:52px;margin:8px 7px 0 3px}
.active{background:#cfcfcf}
.g-align .g-body{padding-left:7px}
.wrapcol{font-size:10.700px}
.sm2{flex:none;margin-right:3px}
.ab{font-size:7.500px;fill:#555;font-family:"Open Sans",sans-serif}
.merge-caret{margin-left:8px}
.pct{font-size:14px;color:#555}
.comma{font-family:"Open Sans",sans-serif;padding-bottom:8px;font-size:13px}
.dec{font-size:6.500px;fill:#555;font-family:"Open Sans",sans-serif}
.g-styles .g-body{padding-left:10px}
.b62{width:62px}.b56{width:56px}.b40{width:40px}
.g-cells .g-body{padding-left:6px}
.g-edit .g-body{padding-left:9px}
.edit-stack{width:83px}
.sigma{width:18px;font-size:20px;font-weight:600;line-height:22px;color:#555;flex:none}
.sum-caret{margin-left:9px}
.az{font-size:14px;font-weight:700;font-family:"Open Sans",sans-serif}
.az-a{fill:#3e79b8}.az-z{fill:#a05ec0}
.collapse{position:absolute;right:1px;bottom:3px}
.strip{height:11px;flex:none;background:#e8e8e8;border-top:1px solid #dcdcdc}

/* formula bar */
.fbar{height:33px;flex:none;background:#e8e8e8;display:flex;align-items:flex-start}
.namebox{height:23px;width:94px;margin-left:6px;background:#fff;display:flex;align-items:center;padding-left:6px;font-size:11.500px;position:relative;border:1px solid #e2e2e2}
.name-caret{margin-left:auto;margin-right:7px}
.fdots{width:30px;height:23px;text-align:center;line-height:23px;color:#aaa}
.fbtns{width:101px;height:23px;background:#f4f4f4;display:flex;align-items:center;padding-left:11px}
.fbtns svg:nth-child(2){margin-left:24px}
.fx{margin-left:24px;font-family:"Liberation Serif",serif;font-style:italic;font-size:13px;color:#666}
.fx small{font-size:9px}
.finput{flex:1;height:23px;margin-left:5px;margin-right:1px;background:#fff;display:flex;align-items:center;padding-left:11px;font-size:11.500px}
.fchev{margin-left:auto;margin-right:3px}

/* sheet */
.sheet{position:relative;height:446px;flex:none;background:#fff;overflow:hidden;border-bottom:1px solid #c0c0c0}
.colhead{display:flex;height:19px;background:#e6e6e6;border-bottom:1px solid #c8c8c8}
.corner{width:24.500px;flex:none;display:flex;align-items:center;justify-content:flex-end;padding-right:1px}
.columns{display:flex;flex:1;overflow:hidden}
.columns span{width:60px;flex:none;text-align:center;padding-left:1px;line-height:18px;font-size:11.200px;color:#4a4a4a;border-right:1px solid #c8c8c8}
.columns .on{background:#d2d2d2;color:#333}
.gridwrap{display:flex}
.rowhead{width:24.500px;flex:none;background:#e6e6e6;display:flex;flex-direction:column;border-right:1px solid #c8c8c8}
.rowhead span{height:18.770px;flex:none;line-height:18px;text-align:center;color:#4a4a4a;font-size:11px}
.rowhead .on{background:#d2d2d2;color:#1f7145}
.cells{flex:1;height:427px;background-image:repeating-linear-gradient(to right,transparent 0 59px,#dedede 59px 60px),repeating-linear-gradient(to bottom,transparent 0 17.770px,#e4e4e4 17.770px 18.770px)}
.selected{position:relative;width:61px;height:20px;margin:-1px 0 0 -1px;border:2px solid #217346;background:#fff;text-align:right;padding-right:1px;line-height:17px;font-size:11.500px;color:#222}
.handle{position:absolute;right:-4px;bottom:-4px;width:6px;height:6px;background:#217346;border:1px solid #fff}
.vscroll{position:absolute;right:0;top:0;bottom:0;width:11px;background:#f4f4f4;display:flex;flex-direction:column;justify-content:space-between;padding:3px 0 1px;border-left:1px solid #dcdcdc}
.sbtn{height:13px;background:#fff;border:1px solid #dadada;display:flex;align-items:center;justify-content:center}
.tri-up,.tri-down,.tri-left,.tri-right{width:0;height:0;border:3px solid transparent}
.tri-up{border-top:0;border-bottom-color:#666}
.tri-down{border-bottom:0;border-top-color:#666}
.tri-left{border-left:0;border-right-color:#666}
.tri-right{border-right:0;border-left-color:#666}
.dim.tri-left{border-right-color:#bbb}
.dim.tri-right{border-left-color:#bbb}

/* sheet tabs */
.sheetbar{height:26px;flex:none;background:#e6e6e6;display:flex;align-items:center;border-bottom:1px solid #d4d4d4}
.nav{width:26px;display:flex;justify-content:center}
.nav-l{margin-left:15px}
.sheet-tab{width:61px;height:25px;margin-left:27px;margin-top:-1px;background:#fff;border-bottom:2px solid #217346;border-left:1px solid #aaa;border-right:1px solid #aaa;display:flex;align-items:center;justify-content:center;font-weight:700;color:#217346;font-size:11.500px}
.add{margin-left:31px}
.sdots{margin-left:562px;color:#999;width:12px;text-align:center}
.hscroll{margin-left:10px;display:flex;height:14px}
.hbtn{width:13px;height:14px;background:#fff;border:1px solid #d4d4d4;display:flex;align-items:center;justify-content:center}
.hthumb{width:427px;background:#fff;border-top:1px solid #d4d4d4;border-bottom:1px solid #d4d4d4}
.hrest{width:23px;background:#d8d8d8}

/* status */
.status{height:20px;flex:none;background:#f3f3f3;display:flex;align-items:center}
.ready{margin-left:8px;color:#555;font-size:10.500px}
.views{display:flex;margin-left:auto;height:20px;margin-right:1px}
.view{width:37.500px;display:flex;align-items:center;justify-content:center}
.view.active{background:#c8c8c8}
.zoom{display:flex;align-items:center;width:163px;color:#555;flex:none}
.zm{width:14px;text-align:center;font-size:14px;line-height:14px;flex:none}
.slider{width:93px;height:1px;background:#999;margin:0 2px;position:relative;flex:none}
.slider i{position:absolute;left:45px;top:-5px;width:5px;height:11px;background:#777}
.pct100{margin-left:10px;font-size:10.200px;color:#666;white-space:nowrap}

/* taskbar */
.taskbar{height:38px;flex:none;background:linear-gradient(to right,#1c2f3b,#1a2a44);display:flex;color:#fff}
.start{width:46px;display:flex;align-items:center;justify-content:center}
.search{width:322px;background:#f0f0f0;display:flex;align-items:center;padding-left:11px;color:#3a3a3a;font-size:14px}
.search span{margin-left:11px}
.tb{width:46px;flex:none;display:flex;align-items:center;justify-content:center;position:relative}
.tb-o{width:44px}
.tb-o+.tb{width:46px}
.tb-o+.tb+.app{margin-left:2px}
.app::after{content:"";position:absolute;left:4px;right:4px;bottom:0;height:2px;background:#76a6cc}
.current{background:#4b5966}
.tile{font-size:10px;font-weight:700;fill:#fff;font-family:"Open Sans",sans-serif}
.tray{margin-left:auto;display:flex;align-items:center;padding-right:7px}
.tray>span{display:flex;align-items:center;justify-content:center}
.t24{width:24px}.t18{width:18px}.t30{width:30px}.t22{width:22px}.t34{width:34px}
.eng{font-size:10.800px}
.clock{width:66px;flex-direction:column;font-size:10.800px;line-height:16px;white-space:nowrap}
.notif{width:38px}
.ncount{font-size:10px;fill:#fff;font-family:"Open Sans",sans-serif;font-weight:600}

/* dialog */
.dialog{position:absolute;left:399px;top:168px;width:259px;height:213px;background:#f0f0f0;border:1px solid #6e6e6e;box-shadow:0 0 8px rgba(0,0,0,.35);color:#444;font-size:10.300px}
.d-head{height:27px;background:#fff;display:flex;align-items:center;padding:0 0 3px 7px;color:#333;font-size:10.800px}
.d-help{margin-left:auto;font-size:13px;color:#444}
.d-x{margin-left:33px;margin-right:16px}
.d-body{padding:7px 0 0 5px}
.d-groups{display:flex;gap:10px;height:90px}
.fs{margin:0;padding:4px 0 0 7px;border:1px solid #e0e0e0;height:90px;min-width:0}
.fs legend{padding:0;margin-left:-2px;line-height:12px;font-size:10.500px}
.fs-in{width:76px}
.fs-type{width:72px}
.fs-unit{width:78px;color:#999}
.opt{display:flex;align-items:center;gap:3px;height:18px;white-space:nowrap}
.radio{width:13px;height:13px;border-radius:50%;border:1.200px solid #555;background:#fff;position:relative;flex:none}
.radio.sel::after{content:"";position:absolute;left:2.500px;top:2.500px;width:6px;height:6px;border-radius:50%;background:#333}
.fs-unit .radio{border-color:#ccc;background:#f0f0f0}
.fs-unit .radio.sel::after{background:#aaa}
.trend{display:flex;align-items:center;gap:4px;height:13px;margin-top:11px}
.check{width:12px;height:12px;border:1px solid #555;background:#fff}
.values{display:flex;align-items:center;height:18px;margin-top:9px}
.v-l1{width:61px}
.v-l2{width:63px;margin-left:9px}
.v-in{width:57px;height:18px;background:#fff;border:1px solid #d8d8d8;padding-left:4px;line-height:16px;position:relative}
.textcaret{width:1px;height:12px;background:#222;vertical-align:-2px}
.ibeam{position:absolute;left:31px;top:-2px}
.d-btns{display:flex;justify-content:flex-end;gap:10px;margin-top:8px;padding-right:6px}
.btn{width:69px;height:21px;background:#e1e1e1;border:1px solid #adadad;display:flex;align-items:center;justify-content:center;color:#333}
.btn-ok{border:2px solid #1e78c2}
```
